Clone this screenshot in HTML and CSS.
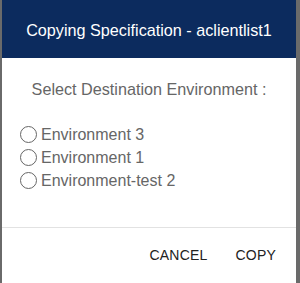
FILE: index.html
```html
<!DOCTYPE html>
<html>
<head>
<meta charset="utf-8">
<link rel="stylesheet" href="styles.css">
</head>
<body>
<div class="dialog">
  <div class="header">Copying Specification - aclientlist1</div>
  <div class="content">
    <div class="prompt">Select Destination Environment :</div>
    <div class="options">
      <label class="option"><span class="radio"></span>Environment 3</label>
      <label class="option"><span class="radio"></span>Environment 1</label>
      <label class="option"><span class="radio"></span>Environment-test 2</label>
    </div>
  </div>
  <div class="actions">
    <button class="btn">CANCEL</button>
    <button class="btn">COPY</button>
  </div>
</div>
</body>
</html>
```

FILE: styles.css
```css
html, body {
  margin: 0;
  padding: 0;
  height: 100%;
}
body {
  background: #6a6a6a;
  padding: 0 4px 0 2px;
  box-sizing: border-box;
  font-family: "Liberation Sans", Arial, sans-serif;
  overflow: hidden;
}
.dialog {
  background: #fff;
  height: 100%;
  display: flex;
  flex-direction: column;
}
.header {
  background: #0c2b5e;
  color: #fff;
  font-size: 16.2px;
  height: 58px;
  display: flex;
  align-items: center;
  justify-content: center;
  padding-top: 2px;
  box-sizing: border-box;
}
.content {
  padding: 21px 0 0 18px;
  height: 170px;
  box-sizing: border-box;
  border-bottom: 1px solid #e2e2e2;
}
.prompt {
  color: #666;
  font-size: 16.2px;
  text-align: center;
  padding-right: 18px;
  line-height: 20px;
}
.options {
  margin-top: 26px;
  display: flex;
  flex-direction: column;
  gap: 4px;
}
.option {
  display: flex;
  align-items: center;
  color: #666;
  font-size: 16px;
  line-height: 19px;
}
.radio {
  width: 17px;
  height: 17px;
  border: 1.6px solid #666;
  border-radius: 50%;
  box-sizing: border-box;
  margin-right: 4px;
}
.actions {
  display: flex;
  justify-content: flex-end;
  padding: 16px 12px 0 0;
}
.btn {
  background: none;
  border: none;
  font-family: "Liberation Sans", Arial, sans-serif;
  font-size: 14px;
  color: #222;
  padding: 3px 8px 3px 8px;
  margin-left: 12px;
  letter-spacing: 0.2px;
}
```
